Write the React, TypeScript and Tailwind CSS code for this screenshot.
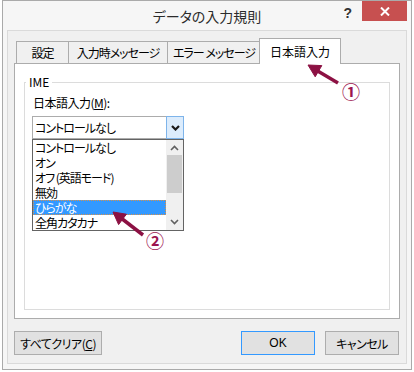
import type { ReactNode } from 'react';

const items = ['コントロールなし', 'オン', 'オフ (英語モード)', '無効', 'ひらがな', '全角カタカナ'];

function Chevron({ up, className }: { up?: boolean; className?: string }) {
  return (
    <svg width="9" height="6" viewBox="0 0 9 6" className={className}>
      <polyline
        points={up ? '1,5 4.5,1.5 8,5' : '1,1 4.5,4.5 8,1'}
        fill="none"
        stroke="currentColor"
        strokeWidth="1.6"
      />
    </svg>
  );
}

function Tab({ width, children }: { width: string; children: ReactNode }) {
  return (
    <div
      className={`-ml-px flex h-[22px] items-center justify-center border border-b-0 border-[#acacac] bg-[#f0f0f0] tracking-[-1px] first:ml-0 ${width}`}
    >
      {children}
    </div>
  );
}

export default function App() {
  return (
    <div className="relative h-[372px] w-[414px] bg-white pl-[2px] font-['Noto_Sans_CJK_JP','Liberation_Sans',sans-serif] text-[12px] leading-[15px] text-black [font-feature-settings:'palt']">
      <div className="flex h-[370px] w-[410px] flex-col border border-[#aaaaaa] bg-[#f6f6f6]">
        {/* タイトルバー */}
        <div className="grid h-[29px] grid-cols-[1fr_auto_1fr]">
          <div />
          <div className="pt-[6px] text-[14px] leading-[18px] text-[#2b2b2b]">データの入力規則</div>
          <div className="flex items-start justify-end">
            <span className="mr-[10px] mt-[4px] font-['Liberation_Sans',sans-serif] text-[14px] font-bold leading-[16px] text-[#333]">
              ?
            </span>
            <button className="mr-[4px] flex h-[20px] w-[45px] items-center justify-center bg-[#c75050] text-white">
              <svg width="10" height="9" viewBox="0 0 10 9">
                <path d="M1 0.5 L9 8.5 M9 0.5 L1 8.5" stroke="currentColor" strokeWidth="2" />
              </svg>
            </button>
          </div>
        </div>

        {/* クライアント領域 */}
        <div className="mx-[4px] flex h-[334px] flex-col border border-[#dadada] bg-[#f0f0f0] px-[6px] pt-[10px]">
          <div className="flex h-[22px] items-end pl-[2px]">
            <Tab width="w-[53px]">設定</Tab>
            <Tab width="w-[100px]">入力時メッセージ</Tab>
            <Tab width="w-[94px]">エラー メッセージ</Tab>
            <div className="relative z-10 -mb-px -ml-[2px] flex h-[26px] w-[82px] items-center justify-center border border-b-0 border-[#acacac] bg-white pb-[1px]">
              日本語入力
            </div>
          </div>

          <div className="h-[256px] border border-[#acacac] bg-white px-[9px] pt-[11px]">
            <fieldset className="h-[235px] border border-[#dcdcdc] pl-[1px]">
              <legend className="px-[3px] leading-[14px]">IME</legend>
              <div className="pl-[6px] pt-[6px]">
                <div className="ml-[1px] tracking-[-0.5px]">
                  日本語入力(<span className="underline">M</span>):
                </div>
                <div className="mt-[6px] flex h-[23px] w-[152px] items-center border border-[#acacac] bg-white">
                  <span className="pl-[2px] tracking-[-1px]">コントロールなし</span>
                  <div className="-my-px -mr-px ml-auto flex h-[23px] w-[18px] items-center justify-center border border-[#7eb4ea] bg-[#dcecfc] text-[#1a1a1a]">
                    <Chevron className="[&>polyline]:[stroke-width:2.2]" />
                  </div>
                </div>
                <div className="flex h-[92px] w-[152px] border border-[#646464] bg-white">
                  <div className="flex flex-1 flex-col tracking-[-1px]">
                    {items.map((it) =>
                      it === 'ひらがな' ? (
                        <div
                          key={it}
                          className="h-[15px] border border-dotted border-[#d9924a] bg-[#3399ff] pl-[1px] leading-[13px] text-white"
                        >
                          {it}
                        </div>
                      ) : (
                        <div key={it} className="h-[15px] pl-[2px] leading-[15px]">
                          {it}
                        </div>
                      ),
                    )}
                  </div>
                  <div className="flex w-[17px] flex-col bg-[#f0f0f0] text-[#606060]">
                    <div className="flex h-[15px] items-center justify-center">
                      <Chevron up />
                    </div>
                    <div className="mx-[1px] h-[38px] bg-[#cdcdcd]" />
                    <div className="flex-1" />
                    <div className="flex h-[17px] items-center justify-center">
                      <Chevron />
                    </div>
                  </div>
                </div>
              </div>
            </fieldset>
          </div>

          <div className="mr-[1px] mt-[12px] flex">
            <button className="h-[24px] w-[88px] border border-[#adadad] bg-[#e1e1e1] tracking-[-0.5px]">
              すべてクリア(<span className="underline">C</span>)
            </button>
            <button className="ml-auto h-[24px] w-[74px] border border-[#3399ff] bg-[#e1e1e1] font-['Liberation_Sans',sans-serif]">
              OK
            </button>
            <button className="ml-[10px] h-[24px] w-[74px] border border-[#adadad] bg-[#e1e1e1] tracking-[-0.5px]">
              キャンセル
            </button>
          </div>
        </div>
      </div>

      {/* 注釈の矢印 */}
      <svg className="pointer-events-none absolute inset-0 z-20" width="414" height="372">
        <g fill="#8c1143" stroke="#8c1143">
          <line x1="338" y1="83" x2="316" y2="70" strokeWidth="3.5" />
          <polygon points="308,65 315.2,76.8 321.8,65.6" strokeWidth="1" />
          <line x1="143" y1="235" x2="121" y2="218" strokeWidth="3.5" />
          <polygon points="113,212 118.6,224.6 126.4,214.2" strokeWidth="1" />
        </g>
      </svg>
      <span className="absolute left-[342px] top-[82px] z-20 text-[18px] font-bold leading-[18px] text-[#9c1450]">①</span>
      <span className="absolute left-[146px] top-[231px] z-20 text-[18px] font-bold leading-[18px] text-[#9c1450]">②</span>
    </div>
  );
}
